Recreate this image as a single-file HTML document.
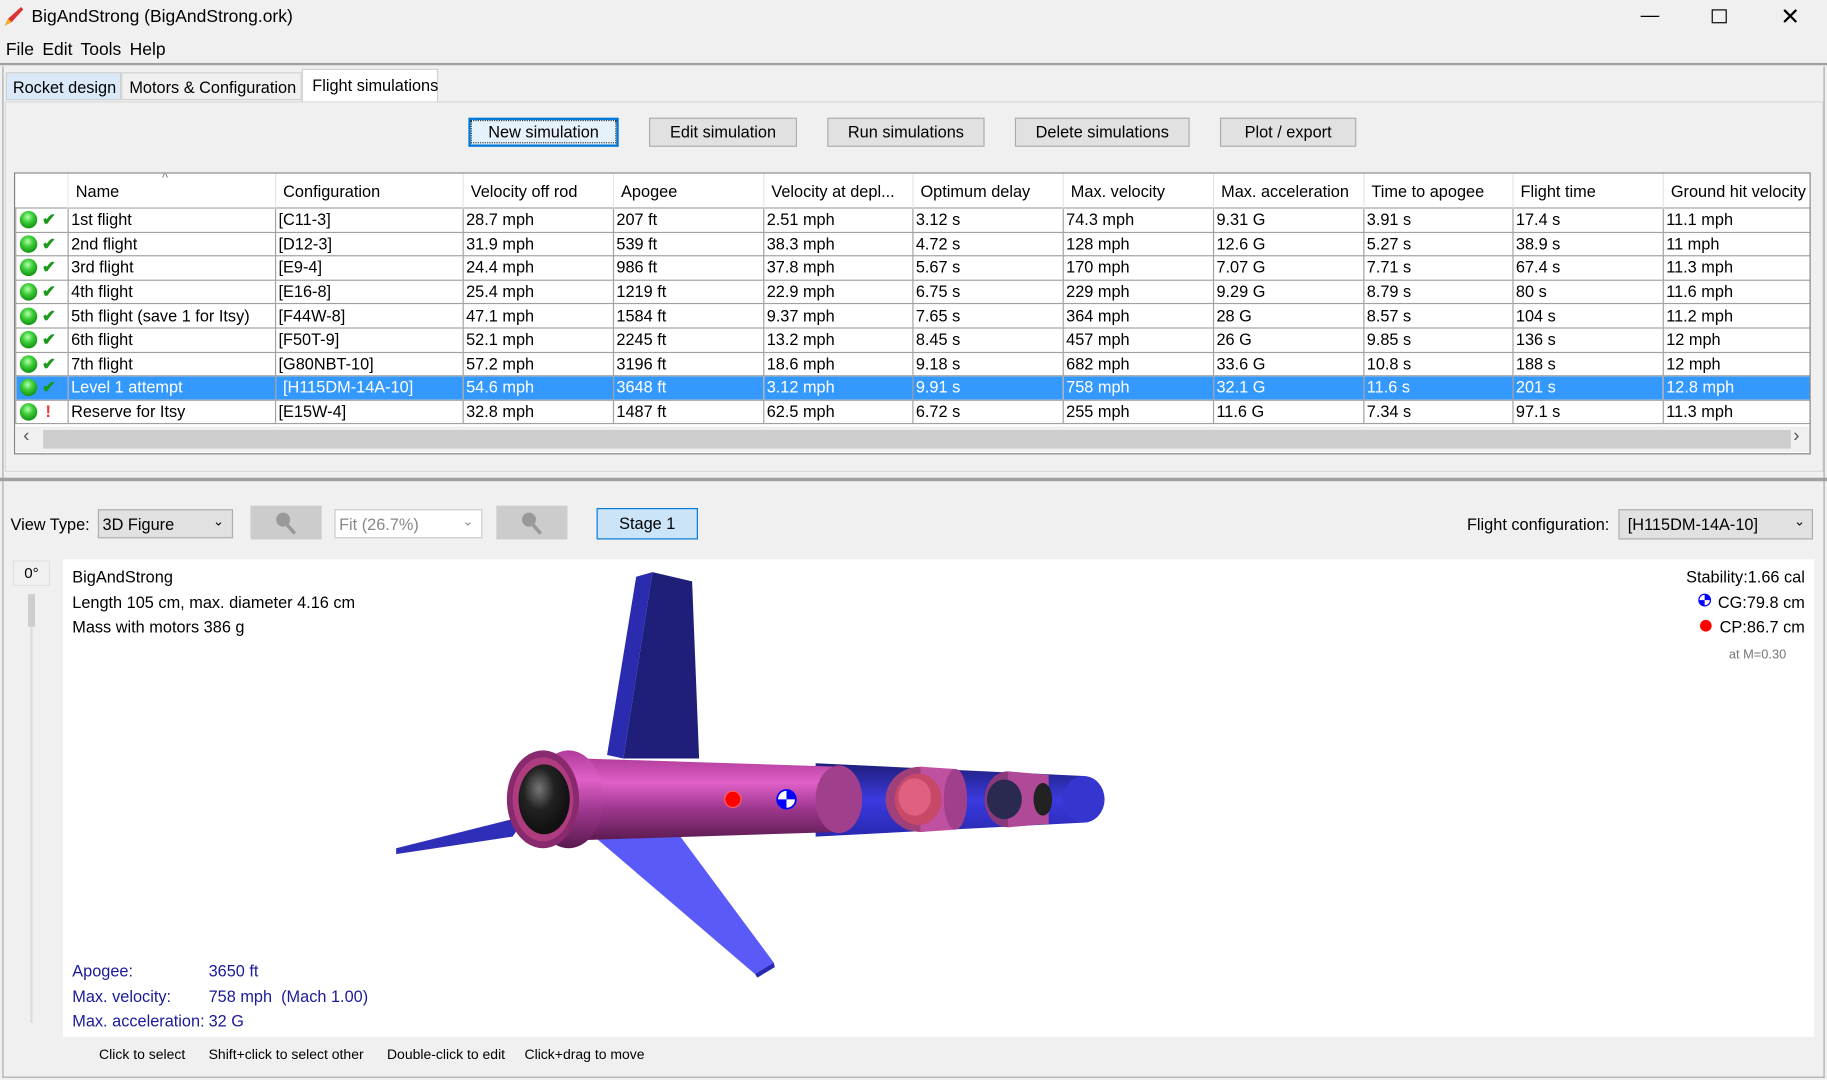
<!DOCTYPE html>
<html><head><meta charset="utf-8">
<style>
html,body{margin:0;padding:0;width:1827px;height:1080px;overflow:hidden;background:#f0f0f0;}
#w{position:absolute;left:0;top:0;width:1568px;height:927px;transform:scale(1.16518);transform-origin:0 0;font-family:"Liberation Sans",sans-serif;font-size:14px;color:#000;background:#f0f0f0;white-space:nowrap;}
.a{position:absolute;}
.btn{position:absolute;top:101px;height:25px;border:1px solid #adadad;background:#e1e1e1;font-size:14px;text-align:center;line-height:23px;box-sizing:border-box;}
table{border-collapse:collapse;table-layout:fixed;}
td{border:1px solid #a0a0a0;height:19.6px;padding:0 0 0 2px;white-space:nowrap;overflow:hidden;font-size:14px;line-height:19px;}
th{font-weight:normal;text-align:left;padding:0 0 0 6px;height:29px;border-right:1px solid #e5e5e5;font-size:14px;background:#fff;white-space:nowrap;overflow:hidden;}
tr.sel td{background:#3399ff;color:#fff;}
.ball{display:inline-block;width:15px;height:15px;border-radius:50%;background:radial-gradient(circle at 45% 35%,#b8ffb0 0,#3ecf3a 35%,#108b10 80%);vertical-align:-3px;margin-left:1px;}
.ck{color:#1a9a1a;font-weight:bold;margin-left:4px;font-size:14px;}
.blue{color:#1a1a9a;}
</style></head><body><div id="w">
<svg class="a" style="left:2px;top:4px" width="20" height="20" viewBox="0 0 20 20"><path d="M2 18 L5 12 L16 2 L18 4 L8 15 Z" fill="#d33"/><path d="M2 18 L5 12 L8 15 Z" fill="#f0b020"/></svg>
<div class="a" style="left:27px;top:6px;font-size:15px">BigAndStrong (BigAndStrong.ork)</div>
<div class="a" style="left:1408px;top:5px;font-size:16px">&#8212;</div>
<div class="a" style="left:1469px;top:8px;width:11px;height:10px;border:1px solid #000"></div>
<div class="a" style="left:1528px;top:2px;font-size:20px">&#10005;</div>
<div class="a" style="left:5px;top:34px;font-size:15px;word-spacing:3px">File Edit Tools Help</div>
<div class="a" style="left:0;top:54px;width:1568px;height:2px;background:#a0a0a0"></div>
<div class="a" style="left:2px;top:57px;width:1564px;height:868px;border:1px solid #a8a8a8;border-top:none;box-sizing:border-box"></div>
<div class="a" style="left:5px;top:62px;width:99px;height:24px;background:#d9e9f7;border:1px solid #d0d0d0;box-sizing:border-box;font-size:14px;padding:4px 0 0 5px">Rocket design</div>
<div class="a" style="left:104px;top:62px;width:155px;height:24px;background:#f0f0f0;border:1px solid #d0d0d0;box-sizing:border-box;font-size:14px;padding:4px 0 0 6px">Motors &amp; Configuration</div>
<div class="a" style="left:259px;top:59px;width:117px;height:29px;background:#fff;border:1px solid #d0d0d0;border-bottom:none;box-sizing:border-box;font-size:14px;padding:5px 0 0 8px">Flight simulations</div>
<div class="a" style="left:4px;top:87px;width:1561px;height:318px;border:1px solid #d9d9d9;box-sizing:border-box"></div>
<div class="btn" style="left:402px;width:129px;background:#e5f1fb;border:2px solid #0078d7;line-height:21px"><span style="border:1px dotted #333;padding:1px 14px">New simulation</span></div>
<div class="btn" style="left:557px;width:127px">Edit simulation</div>
<div class="btn" style="left:710px;width:135px">Run simulations</div>
<div class="btn" style="left:871px;width:150px">Delete simulations</div>
<div class="btn" style="left:1047px;width:117px">Plot / export</div>
<div class="a" style="left:12px;top:148px;width:1542px;height:242px;border:1px solid #828282;background:#fff;box-sizing:border-box;overflow:hidden">
<table style="width:1541px">
<colgroup><col style="width:45px"><col style="width:178px"><col style="width:161px"><col style="width:129px"><col style="width:129px"><col style="width:128px"><col style="width:129px"><col style="width:129px"><col style="width:129px"><col style="width:128px"><col style="width:129px"><col style="width:127px"></colgroup>
<tr><th></th><th style="position:relative">Name<span style="position:absolute;left:80px;top:-2px;font-size:11px;color:#777">^</span></th><th>Configuration</th><th>Velocity off rod</th><th>Apogee</th><th>Velocity at depl...</th><th>Optimum delay</th><th>Max. velocity</th><th>Max. acceleration</th><th>Time to apogee</th><th>Flight time</th><th>Ground hit velocity</th></tr>
<tr><td><span class="ball"></span><span class="ck">&#10004;</span></td><td>1st flight</td><td>[C11-3]</td><td>28.7 mph</td><td>207 ft</td><td>2.51 mph</td><td>3.12 s</td><td>74.3 mph</td><td>9.31 G</td><td>3.91 s</td><td>17.4 s</td><td>11.1 mph</td></tr>
<tr><td><span class="ball"></span><span class="ck">&#10004;</span></td><td>2nd flight</td><td>[D12-3]</td><td>31.9 mph</td><td>539 ft</td><td>38.3 mph</td><td>4.72 s</td><td>128 mph</td><td>12.6 G</td><td>5.27 s</td><td>38.9 s</td><td>11 mph</td></tr>
<tr><td><span class="ball"></span><span class="ck">&#10004;</span></td><td>3rd flight</td><td>[E9-4]</td><td>24.4 mph</td><td>986 ft</td><td>37.8 mph</td><td>5.67 s</td><td>170 mph</td><td>7.07 G</td><td>7.71 s</td><td>67.4 s</td><td>11.3 mph</td></tr>
<tr><td><span class="ball"></span><span class="ck">&#10004;</span></td><td>4th flight</td><td>[E16-8]</td><td>25.4 mph</td><td>1219 ft</td><td>22.9 mph</td><td>6.75 s</td><td>229 mph</td><td>9.29 G</td><td>8.79 s</td><td>80 s</td><td>11.6 mph</td></tr>
<tr><td><span class="ball"></span><span class="ck">&#10004;</span></td><td>5th flight (save 1 for Itsy)</td><td>[F44W-8]</td><td>47.1 mph</td><td>1584 ft</td><td>9.37 mph</td><td>7.65 s</td><td>364 mph</td><td>28 G</td><td>8.57 s</td><td>104 s</td><td>11.2 mph</td></tr>
<tr><td><span class="ball"></span><span class="ck">&#10004;</span></td><td>6th flight</td><td>[F50T-9]</td><td>52.1 mph</td><td>2245 ft</td><td>13.2 mph</td><td>8.45 s</td><td>457 mph</td><td>26 G</td><td>9.85 s</td><td>136 s</td><td>12 mph</td></tr>
<tr><td><span class="ball"></span><span class="ck">&#10004;</span></td><td>7th flight</td><td>[G80NBT-10]</td><td>57.2 mph</td><td>3196 ft</td><td>18.6 mph</td><td>9.18 s</td><td>682 mph</td><td>33.6 G</td><td>10.8 s</td><td>188 s</td><td>12 mph</td></tr>
<tr class="sel"><td><span class="ball"></span><span class="ck">&#10004;</span></td><td>Level 1 attempt</td><td>&nbsp;[H115DM-14A-10]</td><td>54.6 mph</td><td>3648 ft</td><td>3.12 mph</td><td>9.91 s</td><td>758 mph</td><td>32.1 G</td><td>11.6 s</td><td>201 s</td><td>12.8 mph</td></tr>
<tr><td><span class="ball"></span><span class="ck" style="color:#e33;margin-left:7px">!</span></td><td>Reserve for Itsy</td><td>[E15W-4]</td><td>32.8 mph</td><td>1487 ft</td><td>62.5 mph</td><td>6.72 s</td><td>255 mph</td><td>11.6 G</td><td>7.34 s</td><td>97.1 s</td><td>11.3 mph</td></tr>
</table>
<div class="a" style="left:0;top:217px;width:1540px;height:22px;background:#f0f0f0"></div>
<div class="a" style="left:24px;top:220px;width:1500px;height:16px;background:#cdcdcd"></div>
<div class="a" style="left:7px;top:217px;font-size:16px;color:#555">&#8249;</div>
<div class="a" style="left:1526px;top:217px;font-size:16px;color:#555">&#8250;</div>
</div>
<div class="a" style="left:0;top:410px;width:1568px;height:3px;background:#a0a0a0"></div>
<div class="a" style="left:9px;top:442px;font-size:14px">View Type:</div>
<div class="a" style="left:84px;top:437px;width:116px;height:25px;border:1px solid #adadad;background:#e1e1e1;box-sizing:border-box;font-size:14px;padding:4px 0 0 3px">3D Figure<span style="position:absolute;right:7px;top:3px;font-size:11px">&#8964;</span></div>
<div class="a" style="left:215px;top:434px;width:61px;height:29px;background:#cccccc"></div>
<svg class="a" style="left:234px;top:438px" width="22" height="22"><circle cx="9" cy="8" r="6" fill="#999"/><path d="M12 12 L19 20" stroke="#999" stroke-width="3"/></svg>
<div class="a" style="left:287px;top:437px;width:127px;height:25px;border:1px solid #c8c8c8;background:#fff;box-sizing:border-box;font-size:14px;padding:4px 0 0 3px;color:#888">Fit (26.7%)<span style="position:absolute;right:7px;top:3px;font-size:11px">&#8964;</span></div>
<div class="a" style="left:426px;top:434px;width:61px;height:29px;background:#cccccc"></div>
<svg class="a" style="left:445px;top:438px" width="22" height="22"><circle cx="9" cy="8" r="6" fill="#999"/><path d="M12 12 L19 20" stroke="#999" stroke-width="3"/></svg>
<div class="a" style="left:512px;top:436px;width:87px;height:27px;border:1px solid #0078d7;background:#cce4f7;box-sizing:border-box;font-size:14px;text-align:center;line-height:24px">Stage 1</div>
<div class="a" style="left:1259px;top:442px;font-size:14px">Flight configuration:</div>
<div class="a" style="left:1389px;top:437px;width:167px;height:26px;border:1px solid #adadad;background:#e1e1e1;box-sizing:border-box;font-size:14px;padding:4px 0 0 7px">[H115DM-14A-10]<span style="position:absolute;right:6px;top:3px;font-size:11px">&#8964;</span></div>
<div class="a" style="left:54px;top:480px;width:1503px;height:410px;background:#fff"></div>
<div class="a" style="left:11px;top:481px;width:32px;height:22px;background:#f0f0f0;border:1px solid #e0e0e0;box-sizing:border-box;text-align:center;font-size:13px;line-height:20px">0°</div>
<div class="a" style="left:24px;top:510px;width:6px;height:28px;background:#cdcdcd"></div>
<div class="a" style="left:26px;top:538px;width:2px;height:340px;background:#ddd"></div>
<div class="a" style="left:62px;top:485px;font-size:14px;line-height:21.5px">BigAndStrong<br>Length 105 cm, max. diameter 4.16 cm<br>Mass with motors 386 g</div>
<div class="a" style="left:1300px;top:485px;width:249px;text-align:right;font-size:14px;line-height:21.5px">Stability:1.66 cal<br>CG:79.8 cm<br>CP:86.7 cm<br><span style="font-size:11px;color:#777;margin-right:16px">at M=0.30</span></div>
<svg class="a" style="left:1457px;top:509px" width="12" height="12"><circle cx="6" cy="6" r="5" fill="#fff" stroke="#00f"/><path d="M6 1 A5 5 0 0 1 11 6 L6 6Z M6 11 A5 5 0 0 1 1 6 L6 6Z" fill="#00f"/></svg>
<svg class="a" style="left:1458px;top:531px" width="12" height="12"><circle cx="6" cy="6" r="5" fill="#f00"/></svg>
<div class="a blue" style="left:62px;top:823px;font-size:14px;line-height:21.5px">Apogee:<br>Max. velocity:<br>Max. acceleration:</div>
<div class="a blue" style="left:179px;top:823px;font-size:14px;line-height:21.5px">3650 ft<br>758 mph&nbsp; (Mach 1.00)<br>32 G</div>
<div class="a" style="left:85px;top:898px;font-size:12px">Click to select&nbsp;&nbsp;&nbsp;&nbsp;&nbsp; Shift+click to select other&nbsp;&nbsp;&nbsp;&nbsp;&nbsp; Double-click to edit&nbsp;&nbsp;&nbsp;&nbsp; Click+drag to move</div>
<svg class="a" style="left:0;top:0" width="1568" height="927">
<defs>
<linearGradient id="pk" x1="0" y1="0" x2="0" y2="1"><stop offset="0" stop-color="#b03c9a"/><stop offset="0.3" stop-color="#e060c8"/><stop offset="0.6" stop-color="#a03890"/><stop offset="1" stop-color="#5a1a4e"/></linearGradient>
<linearGradient id="bl" x1="0" y1="0" x2="0" y2="1"><stop offset="0" stop-color="#1e1e7a"/><stop offset="0.5" stop-color="#3a3ae0"/><stop offset="1" stop-color="#2828b0"/></linearGradient>
<radialGradient id="bk" cx="0.4" cy="0.35" r="0.6"><stop offset="0" stop-color="#777"/><stop offset="0.5" stop-color="#222"/><stop offset="1" stop-color="#111"/></radialGradient>
</defs>
<path d="M560 491 L594 499 L600 651 L535 651 Z" fill="#1f1f7a"/>
<path d="M560 491 L546 495 L521 648 L535 651 Z" fill="#2b2bb0"/>
<path d="M340 728 L340 733 L440 718 L452 700 Z" fill="#2e2eb8"/>
<path d="M700 655 L930 666 L930 706 L700 718 Z" fill="url(#bl)"/>
<ellipse cx="930" cy="686" rx="18" ry="20" fill="#3535d0"/>
<path d="M503 712 L578 710 L664 826 L648 836 Z" fill="#5a5af8"/>
<path d="M648 836 L664 826 L665 830 L650 839 Z" fill="#2828b0"/>
<path d="M470 650 L720 658 L720 714 L470 722 Z" fill="url(#pk)"/>
<ellipse cx="720" cy="686" rx="20" ry="29" fill="#a0408c"/>
<ellipse cx="488" cy="686" rx="30" ry="42" fill="url(#pk)"/>
<ellipse cx="466" cy="686" rx="31" ry="42" fill="#8a2a6e"/>
<ellipse cx="466" cy="686" rx="26" ry="36" fill="#b03c80"/>
<ellipse cx="467" cy="686" rx="22" ry="30" fill="url(#bk)"/>
<ellipse cx="790" cy="686" rx="30" ry="28" fill="#a0407a"/>
<path d="M790 658 L820 660 L820 712 L790 714 Z" fill="#c050a0"/>
<ellipse cx="820" cy="686" rx="10" ry="26" fill="#a0408c"/>
<ellipse cx="788" cy="686" rx="20" ry="22" fill="#c84868"/>
<ellipse cx="785" cy="684" rx="14" ry="16" fill="#e06080"/>
<ellipse cx="865" cy="686" rx="20" ry="24" fill="#8a3a7a"/>
<path d="M865 662 L900 665 L900 707 L865 710 Z" fill="#b04a98"/>
<ellipse cx="862" cy="686" rx="15" ry="17" fill="#2a2a50"/>
<ellipse cx="895" cy="686" rx="8" ry="14" fill="#222"/>
<circle cx="629" cy="686" r="7" fill="#f00" stroke="#ff6060"/>
<circle cx="675" cy="686" r="8" fill="#fff" stroke="#00f" stroke-width="1.5"/>
<path d="M675 678 A8 8 0 0 1 683 686 L675 686Z M675 694 A8 8 0 0 1 667 686 L675 686Z" fill="#00f"/>
</svg>
</div></body></html>
